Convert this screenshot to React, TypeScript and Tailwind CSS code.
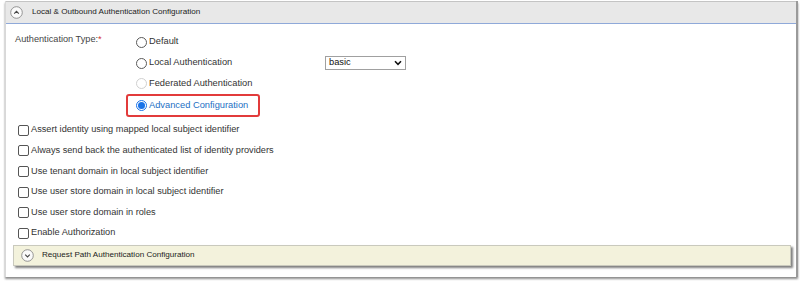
import React from 'react';

const font = { fontFamily: '"Liberation Sans", Arial, sans-serif' };

const CircleChevron: React.FC<{ up?: boolean }> = ({ up }) => (
    <svg width="13" height="13" viewBox="0 0 13 13" className="shrink-0">
        <circle cx="6.5" cy="6.5" r="5.8" fill="#fafafa" stroke="#8a8a8a" strokeWidth="0.9" />
        {up ? (
            <path d="M4.2 7.6 L6.5 5.3 L8.8 7.6" fill="none" stroke="#444" strokeWidth="1.1" />
        ) : (
            <path d="M4.2 5.6 L6.5 7.9 L8.8 5.6" fill="none" stroke="#444" strokeWidth="1.1" />
        )}
    </svg>
);

const Radio: React.FC<{ label: string; checked?: boolean; disabled?: boolean }> = ({ label, checked, disabled }) => (
    <div className="flex items-center h-[20.7px]">
        <span
            className={`w-[11px] h-[11px] rounded-full border flex items-center justify-center bg-white ${
                disabled ? 'border-[#d0d0d0]' : checked ? 'border-[#1a73e8]' : 'border-[#5a5a5a]'
            }`}
        >
            {checked && <span className="w-[7px] h-[7px] rounded-full bg-[#1a73e8]" />}
        </span>
        <span className={`ml-[2px] text-[9.3px] ${checked ? 'text-[#1d6fc4]' : 'text-[#333]'}`}>{label}</span>
    </div>
);

const Check: React.FC<{ label: string }> = ({ label }) => (
    <div className="flex items-center h-[20.6px] pl-[12px]">
        <span className="w-[11px] h-[11px] rounded-[2px] border border-[#555] bg-white" />
        <span className="ml-[2px] text-[9.2px] text-[#333]">{label}</span>
    </div>
);

export default function App() {
    const checks = [
        'Assert identity using mapped local subject identifier',
        'Always send back the authenticated list of identity providers',
        'Use tenant domain in local subject identifier',
        'Use user store domain in local subject identifier',
        'Use user store domain in roles',
        'Enable Authorization',
    ];

    return (
        <div className="w-[800px] h-[283px] bg-white overflow-hidden" style={font}>
            <div className="ml-[5px] w-[793px] h-[276px] border-l border-[#d8d8d8] border-r-2 border-r-[#9a9a9a] bg-white shadow-[0_2px_2px_rgba(0,0,0,0.45)]">
                {/* header */}
                <div className="h-[23px] mt-[1px] border-t border-[#c4c4c4] border-b border-b-[#8fa9d9] bg-[#e8e8e8] flex items-center pl-[4px]">
                    <CircleChevron up />
                    <span className="ml-[9px] text-[8.1px] text-[#222]">Local &amp; Outbound Authentication Configuration</span>
                </div>

                {/* body */}
                <div className="pt-[8px]">
                    <div className="flex">
                        <div className="w-[130px] pl-[9px] pt-[1px] text-[9.2px] text-[#444]">
                            Authentication Type:<span className="text-[#d32f2f]">*</span>
                        </div>
                        <div className="flex flex-col">
                            <Radio label="Default" />
                            <div className="flex items-center">
                                <div className="w-[189px]">
                                    <Radio label="Local Authentication" />
                                </div>
                                <div className="w-[81px] h-[14px] border border-[#a0a0a0] bg-white flex items-center justify-between px-[3px] text-[9.3px] text-[#111]">
                                    <span>basic</span>
                                    <svg width="8" height="6" viewBox="0 0 8 6">
                                        <path d="M1 1.3 L4 4.3 L7 1.3" fill="none" stroke="#111" strokeWidth="1.6" />
                                    </svg>
                                </div>
                            </div>
                            <Radio label="Federated Authentication" disabled />
                            <div className="-ml-[10px] w-[134px] h-[23px] border-2 border-[#e23b3b] rounded-[3px] pl-[8px] flex items-center">
                                <Radio label="Advanced Configuration" checked />
                            </div>
                        </div>
                    </div>

                    <div className="mt-[3px]">
                        {checks.map((c) => (
                            <Check key={c} label={c} />
                        ))}
                    </div>

                    {/* request path bar */}
                    <div className="ml-[7px] mt-[1px] w-[778px] h-[21px] bg-[#f3f2dc] border border-[#c9c9bd] shadow-[2px_2px_2px_rgba(0,0,0,0.5)] flex items-center pl-[7px]">
                        <CircleChevron />
                        <span className="ml-[8px] text-[8.1px] text-[#222]">Request Path Authentication Configuration</span>
                    </div>
                </div>
            </div>
        </div>
    );
}
